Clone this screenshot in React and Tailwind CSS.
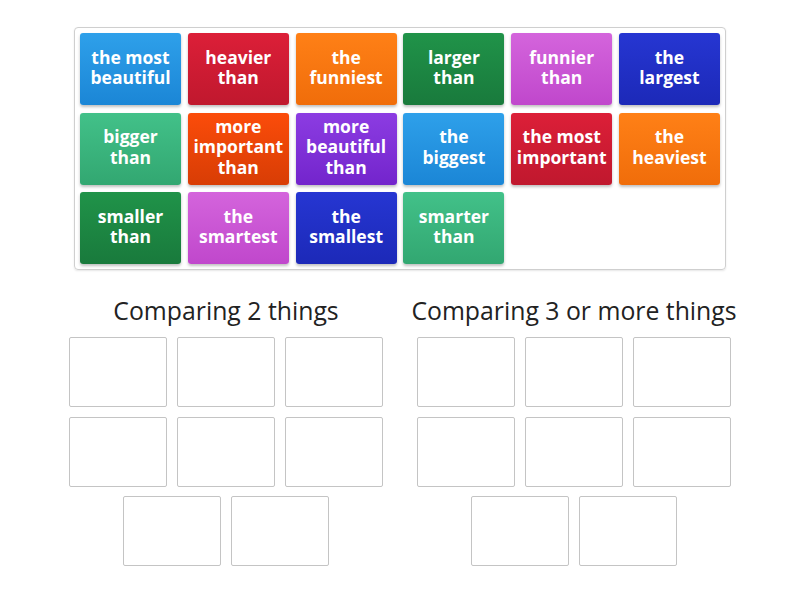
const tiles = [
    { lines: ["the most", "beautiful"], color: "from-[#2ea0ea] to-[#1b86d6]" },
    { lines: ["heavier", "than"], color: "from-[#dc1f38] to-[#c0182e]" },
    { lines: ["the", "funniest"], color: "from-[#ff8016] to-[#f06d0a]" },
    { lines: ["larger", "than"], color: "from-[#209349] to-[#197a3c]" },
    { lines: ["funnier", "than"], color: "from-[#d464dc] to-[#c047cc]" },
    { lines: ["the", "largest"], color: "from-[#2636d2] to-[#1c29b8]" },
    { lines: ["bigger", "than"], color: "from-[#42c189] to-[#32a771]" },
    { lines: ["more", "important", "than"], color: "from-[#fb4c0a] to-[#d83d05]" },
    { lines: ["more", "beautiful", "than"], color: "from-[#8c3ce2] to-[#7324cc]" },
    { lines: ["the", "biggest"], color: "from-[#2ea0ea] to-[#1b86d6]" },
    { lines: ["the most", "important"], color: "from-[#dc1f38] to-[#c0182e]" },
    { lines: ["the", "heaviest"], color: "from-[#ff8016] to-[#f06d0a]" },
    { lines: ["smaller", "than"], color: "from-[#209349] to-[#197a3c]" },
    { lines: ["the", "smartest"], color: "from-[#d464dc] to-[#c047cc]" },
    { lines: ["the", "smallest"], color: "from-[#2636d2] to-[#1c29b8]" },
    { lines: ["smarter", "than"], color: "from-[#42c189] to-[#32a771]" },
];

const Tile = ({ lines, color }) => (
    <div className={`w-[101px] h-[72px] rounded-[3px] bg-gradient-to-b ${color} shadow-[0_2px_3px_rgba(0,0,0,0.25)] flex flex-col items-center justify-center pb-[4px] text-center text-white font-bold text-[17.5px] leading-[20.5px]`}>
        {lines.map((l) => (
            <span key={l} className="whitespace-nowrap">{l}</span>
        ))}
    </div>
);

const DropGroup = ({ title }) => (
    <div className="w-[348px] flex flex-col items-center">
        <h2 className="text-[24.8px] leading-[32px] text-[#222] font-normal">{title}</h2>
        <div className="mt-[11px] w-[316px] flex flex-wrap justify-center gap-x-[9.7px] gap-y-[9.5px]">
            {Array.from({ length: 8 }).map((_, i) => (
                <div key={i} className="w-[98px] h-[70px] border border-[#c4c4c4] rounded-[2px] bg-white" />
            ))}
        </div>
    </div>
);

export default function App() {
    return (
        <div className="w-[800px] h-[600px] bg-white flex flex-col items-center font-['Open_Sans',sans-serif]">
            <div className="mt-[27px] w-[652px] border border-[#cfcfcf] rounded-[4px] shadow-[0_1px_2px_rgba(0,0,0,0.1)] p-[5px] grid grid-cols-[repeat(6,101px)] gap-x-[6.8px] gap-y-[7.5px]">
                {tiles.map((t) => (
                    <Tile key={t.lines.join(" ")} {...t} />
                ))}
            </div>
            <div className="mt-[24px] w-[696px] flex">
                <DropGroup title="Comparing 2 things" />
                <DropGroup title="Comparing 3 or more things" />
            </div>
        </div>
    );
}
